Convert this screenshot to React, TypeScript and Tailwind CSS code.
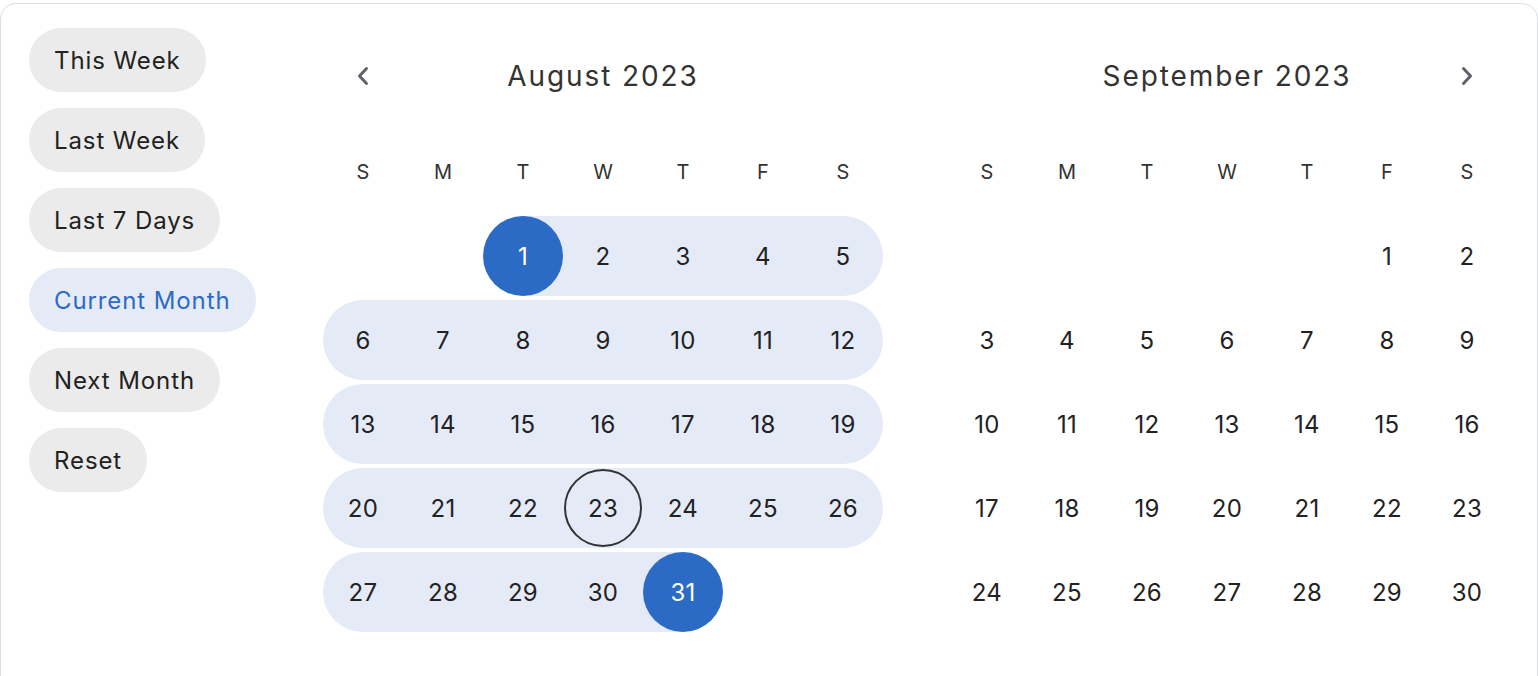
import React from "react";

function Chevron({ dir }: { dir: "left" | "right" }) {
  return (
    <svg width="24" height="24" viewBox="0 0 24 24" fill="none">
      {dir === "left" ? (
        <path d="M15.5 4.5 L8.5 12 L15.5 19.5" stroke="#5f6368" strokeWidth="3" strokeLinecap="round" strokeLinejoin="round" />
      ) : (
        <path d="M8.5 4.5 L15.5 12 L8.5 19.5" stroke="#5f6368" strokeWidth="3" strokeLinecap="round" strokeLinejoin="round" />
      )}
    </svg>
  );
}

const WEEK = ["S", "M", "T", "W", "T", "F", "S"];

type Cell = number | null;

function buildWeeks(startDow: number, days: number): Cell[][] {
  const cells: Cell[] = [];
  for (let i = 0; i < startDow; i++) cells.push(null);
  for (let d = 1; d <= days; d++) cells.push(d);
  while (cells.length % 7 !== 0) cells.push(null);
  const weeks: Cell[][] = [];
  for (let i = 0; i < cells.length; i += 7) weeks.push(cells.slice(i, i + 7));
  return weeks;
}

function DayCell({
  day,
  inRange,
  rangeStart,
  rangeEnd,
  rowStart,
  rowEnd,
  today,
}: {
  day: Cell;
  inRange: boolean;
  rangeStart: boolean;
  rangeEnd: boolean;
  rowStart: boolean;
  rowEnd: boolean;
  today: boolean;
}) {
  let bg = "";
  if (inRange) {
    if (rangeStart && rangeEnd) bg = "";
    else if (rangeStart) bg = "bg-[linear-gradient(to_right,transparent_50%,#e5eaf7_50%)]";
    else if (rangeEnd) bg = "bg-[linear-gradient(to_right,#e5eaf7_50%,transparent_50%)]";
    else {
      bg = "bg-[#e5eaf7]";
      if (rowStart) bg += " rounded-l-full";
      if (rowEnd) bg += " rounded-r-full";
    }
    if (rangeStart && rowEnd) bg = "";
    if (rangeEnd && rowStart) bg = "";
  }
  const selected = rangeStart || rangeEnd;
  return (
    <div className={`w-[80px] h-[80px] flex items-center justify-center ${bg}`}>
      {day !== null && (
        <div
          className={`rounded-full flex items-center justify-center text-[24px] tracking-[0.3px] pt-[1px] ${
            selected
              ? "w-[80px] h-[80px] bg-[#2c6bc5] text-white"
              : today
              ? "w-[78px] h-[78px] border-2 border-[#333] text-[#222]"
              : "w-[80px] h-[80px] text-[#222]"
          }`}
        >
          {day}
        </div>
      )}
    </div>
  );
}

function Month({
  title,
  startDow,
  days,
  range,
  today,
  left,
  right,
}: {
  title: string;
  startDow: number;
  days: number;
  range?: [number, number];
  today?: number;
  left?: boolean;
  right?: boolean;
}) {
  const weeks = buildWeeks(startDow, days);
  return (
    <div className="w-[560px] flex flex-col">
      <div className="h-[96px] flex items-center">
        <div className="w-[80px] flex items-center justify-center">{left && <Chevron dir="left" />}</div>
        <div className="flex-1 text-center text-[28px] text-[#333] tracking-[1.9px]">{title}</div>
        <div className="w-[80px] flex items-center justify-center">{right && <Chevron dir="right" />}</div>
      </div>
      <div className="mt-[8px] h-[80px] grid grid-cols-7">
        {WEEK.map((w, i) => (
          <div key={i} className="flex items-center justify-center text-[20px] text-[#333]">
            {w}
          </div>
        ))}
      </div>
      <div className="mt-[4px] flex flex-col gap-[4px]">
        {weeks.map((wk, wi) => {
          const nums = wk.filter((d) => d !== null && range && d >= range[0] && d <= range[1]) as number[];
          const first = nums.length ? Math.min(...nums) : -1;
          const last = nums.length ? Math.max(...nums) : -1;
          return (
            <div key={wi} className="flex">
              {wk.map((d, di) => {
                const inRange = d !== null && !!range && d >= range[0] && d <= range[1];
                return (
                  <DayCell
                    key={di}
                    day={d}
                    inRange={inRange}
                    rangeStart={!!range && d === range[0]}
                    rangeEnd={!!range && d === range[1]}
                    rowStart={d === first}
                    rowEnd={d === last}
                    today={d === today}
                  />
                );
              })}
            </div>
          );
        })}
      </div>
    </div>
  );
}

const PRESETS = ["This Week", "Last Week", "Last 7 Days", "Current Month", "Next Month", "Reset"];

export default function App() {
  return (
    <div className="bg-white w-[1538px] h-[676px] overflow-hidden pt-[3px]" style={{ fontFamily: "Inter, 'Noto Sans', sans-serif" }}>
      <div className="border border-[#d8dfe8] rounded-[16px] h-[720px] pl-[28px] pt-[24px] flex">
        <div className="w-[294px] flex flex-col items-start gap-[16px]">
          {PRESETS.map((p) => (
            <button
              key={p}
              className={`h-[64px] px-[25px] pt-[2px] rounded-full text-[24px] tracking-[0.9px] ${
                p === "Current Month" ? "bg-[#e5eaf7] text-[#2c6bc5]" : "bg-[#ebebeb] text-[#222]"
              }`}
            >
              {p}
            </button>
          ))}
        </div>
        <div className="flex gap-[64px]">
          <Month title="August 2023" startDow={2} days={31} range={[1, 31]} today={23} left />
          <Month title="September 2023" startDow={5} days={30} right />
        </div>
      </div>
    </div>
  );
}
